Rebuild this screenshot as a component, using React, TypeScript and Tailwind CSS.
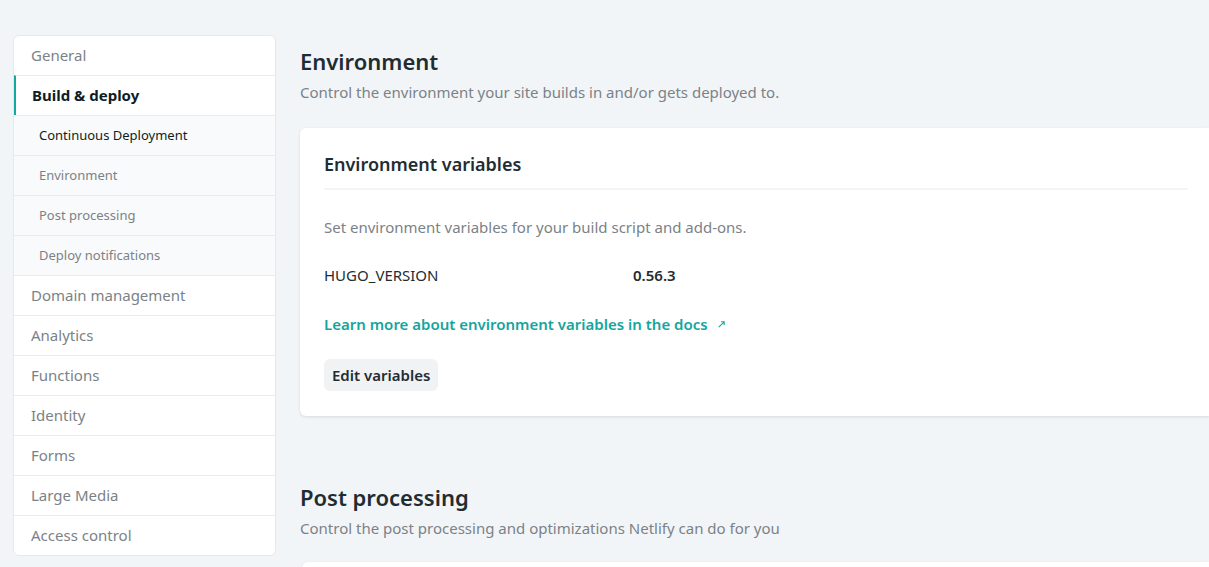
const font = { fontFamily: '"Noto Sans", "Open Sans", sans-serif' };

type NavItem = { label: string; sub?: boolean; active?: boolean; current?: boolean };

const nav: NavItem[] = [
  { label: 'General' },
  { label: 'Build & deploy', active: true },
  { label: 'Continuous Deployment', sub: true, current: true },
  { label: 'Environment', sub: true },
  { label: 'Post processing', sub: true },
  { label: 'Deploy notifications', sub: true },
  { label: 'Domain management' },
  { label: 'Analytics' },
  { label: 'Functions' },
  { label: 'Identity' },
  { label: 'Forms' },
  { label: 'Large Media' },
  { label: 'Access control' },
];

function Sidebar() {
  return (
    <nav className="w-[263px] shrink-0 self-start overflow-hidden rounded-md border border-[#e6e8ea] bg-white">
      {nav.map((item, i) => {
        let cls = 'flex h-10 items-center border-t border-[#e9ebec] ';
        if (i === 0) cls += 'border-t-0 h-[39px] ';
        if (item.sub) {
          cls += 'bg-[#f9fafb] pl-[25px] text-[13px] ' + (item.current ? 'text-[#0e1e25]' : 'text-[#7b8287]');
        } else if (item.active) {
          cls += 'border-l-2 border-l-[#14a9a0] pl-4 text-[15px] font-bold text-[#0e1e25]';
        } else {
          cls += 'pl-[17px] text-[15px] text-[#7b8287]';
        }
        return (
          <div key={item.label} className={cls}>
            {item.label}
          </div>
        );
      })}
    </nav>
  );
}

export default function App() {
  return (
    <div style={font} className="h-[567px] w-full overflow-hidden bg-[#f2f5f8] pl-[13px] pt-[35px]">
      <div className="flex gap-6">
        <Sidebar />
        <main className="min-w-0 flex-1">
          <section>
            <h1 className="mt-[11px] text-[22px] font-semibold leading-[30px] text-[#1f2d33]">Environment</h1>
            <p className="mt-[6px] text-[15px] leading-5 text-[#7b8287]">
              Control the environment your site builds in and/or gets deployed to.
            </p>
            <div className="mt-[26px] rounded-l-md bg-white px-6 pb-[25px] pt-[22px] shadow-[0_1px_3px_rgba(14,30,37,0.12)]">
              <h2 className="mr-[-3px] border-b-2 border-[#f2f4f5] pb-[10px] text-[18px] font-semibold leading-[28px] text-[#1f2d33]">
                Environment variables
              </h2>
              <p className="mt-[27px] text-[15px] leading-5 text-[#7b8287]">
                Set environment variables for your build script and add-ons.
              </p>
              <div className="mt-[28px] flex text-[15px] leading-5 text-[#1f2d33]">
                <span className="w-[309px]">HUGO_VERSION</span>
                <span className="font-semibold">0.56.3</span>
              </div>
              <a href="#" className="mt-[29px] flex items-center text-[15px] font-semibold leading-5 text-[#15a5a0]">
                Learn more about environment variables in the docs
                <svg viewBox="0 0 10 10" className="ml-[9px] h-[9px] w-[9px]" fill="none" stroke="currentColor" strokeWidth="1.2">
                  <path d="M2 8 L8 2 M4.5 2 H8 V5.5" />
                </svg>
              </a>
              <button className="mt-[25px] flex h-8 items-center rounded-md bg-[#f0f2f4] px-2 text-[15px] font-semibold text-[#1f2d33]">
                Edit variables
              </button>
            </div>
          </section>
          <section className="mt-[66px]">
            <h1 className="text-[22px] font-semibold leading-[30px] text-[#1f2d33]">Post processing</h1>
            <p className="mt-[6px] text-[15px] leading-5 text-[#7b8287]">
              Control the post processing and optimizations Netlify can do for you
            </p>
            <div className="ml-[2px] mt-[24px] h-10 rounded-l-md bg-white shadow-[0_1px_3px_rgba(14,30,37,0.12)]" />
          </section>
        </main>
      </div>
    </div>
  );
}
